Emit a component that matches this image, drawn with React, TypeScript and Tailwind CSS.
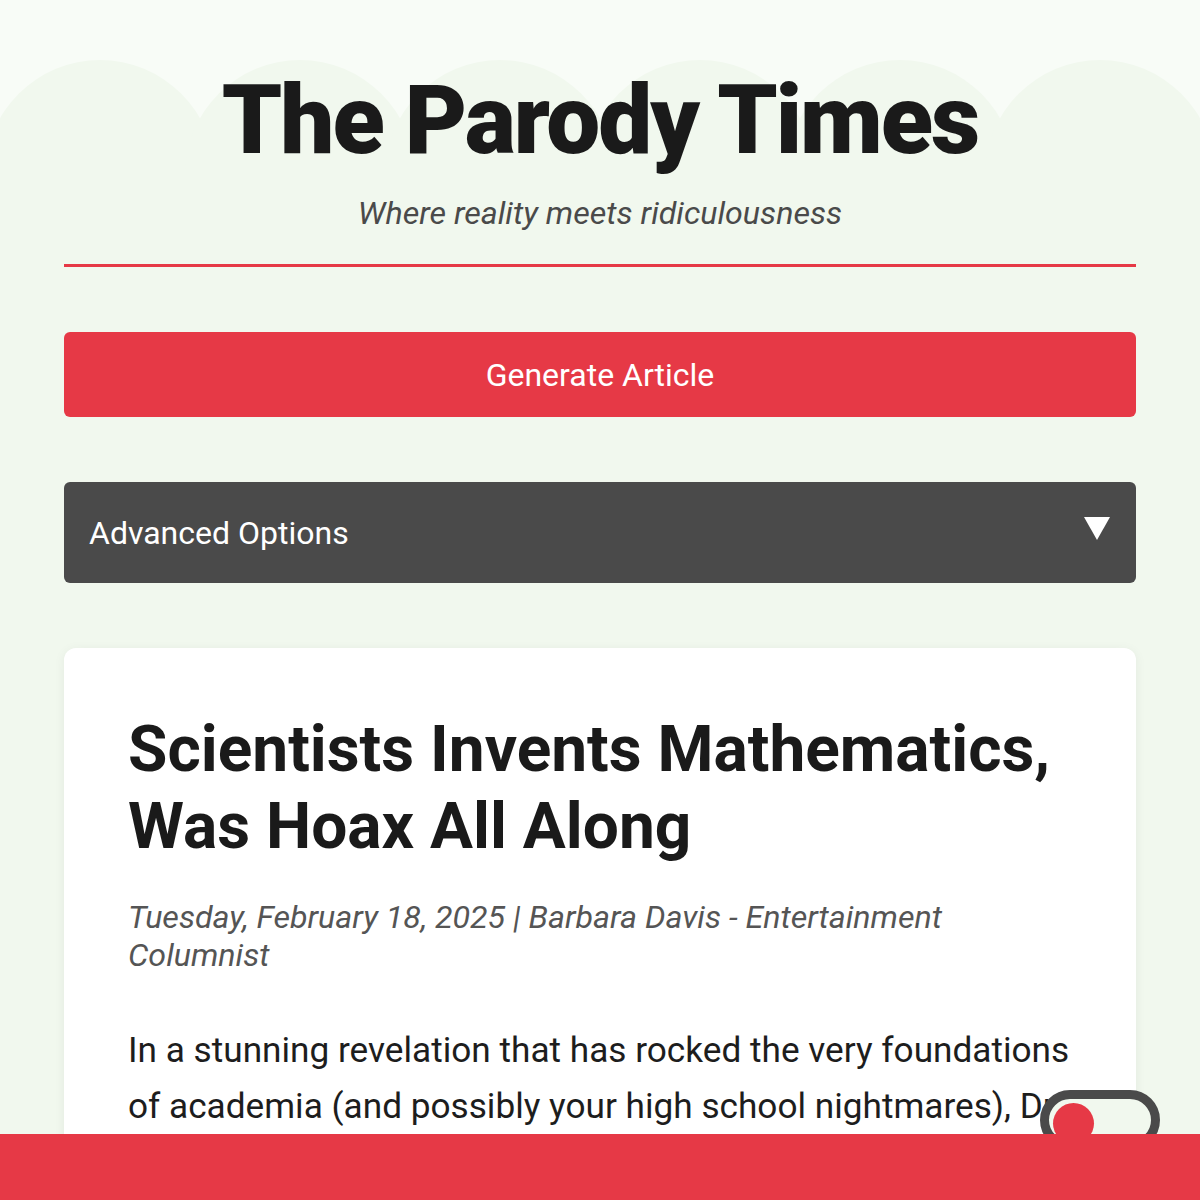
export default function App() {
  const bumps = [100, 300, 500, 700, 900, 1100];

  return (
    <div className="relative min-h-screen bg-[#f1f8ee] font-['Roboto',sans-serif] text-[#1d1d1d]">
      {/* scalloped backdrop */}
      <svg
        className="absolute left-0 top-0 w-full"
        height="240"
        viewBox="0 0 1200 240"
        preserveAspectRatio="none"
      >
        <rect x="0" y="0" width="1200" height="240" fill="#f8fcf7" />
        {bumps.map((cx) => (
          <circle key={cx} cx={cx} cy={175} r={115} fill="#f1f8ee" />
        ))}
        <rect x="0" y="175" width="1200" height="65" fill="#f1f8ee" />
      </svg>

      <main className="relative mx-auto max-w-[1072px] pb-40">
        <header className="border-b-[3px] border-[#e63946] pt-[63px] pb-[27px] text-center">
          <h1 className="text-[96px] font-black leading-[1.2] tracking-[-2px] text-[#1a1a1a]">
            The Parody Times
          </h1>
          <p className="mt-[11px] text-[32.2px] italic text-[#4a4a4a]">
            Where reality meets ridiculousness
          </p>
        </header>

        <button className="mt-[65px] flex h-[85px] w-full items-center justify-center rounded-[6px] bg-[#e63946] text-[32px] text-white">
          Generate Article
        </button>

        <div className="mt-[65px] flex h-[101px] items-center justify-between rounded-[6px] bg-[#4a4a4a] pl-[25px] pr-[26px] text-white">
          <span className="text-[32px]">Advanced Options</span>
          <svg width="26" height="23" viewBox="0 0 26 23" className="-mt-[9px]">
            <polygon points="0,0 26,0 13,23" fill="#ffffff" />
          </svg>
        </div>

        <article className="mt-[65px] rounded-[12px] bg-white p-16 shadow-[0_2px_12px_rgba(0,0,0,0.06)]">
          <h2 className="text-[64px] font-bold leading-[1.2] text-[#1a1a1a]">
            Scientists Invents Mathematics, Was Hoax All Along
          </h2>
          <p className="mt-[32px] text-[32.2px] italic leading-[38px] text-[#555555]">
            Tuesday, February 18, 2025 | Barbara Davis - Entertainment Columnist
          </p>
          <p className="mt-[48px] text-[35.2px] leading-[1.6] text-[#1d1d1d]">
            In a stunning revelation that has rocked the very foundations of
            academia (and possibly your high school nightmares), Dr. Reginald
            Numberly announced today that mathematics was never real and was
            simply an elaborate prank played on humanity for centuries.
          </p>
        </article>
      </main>

      {/* theme toggle */}
      <div className="fixed bottom-[50px] right-[40px] h-[60px] w-[120px] rounded-[30px] border-[9px] border-[#4a4a4a] bg-[#f1f8ee] p-[4px]">
        <div className="h-[41px] w-[41px] rounded-full bg-[#e63946]" />
      </div>

      <footer className="fixed bottom-0 left-0 right-0 h-[66px] bg-[#e63946]" />
    </div>
  );
}
